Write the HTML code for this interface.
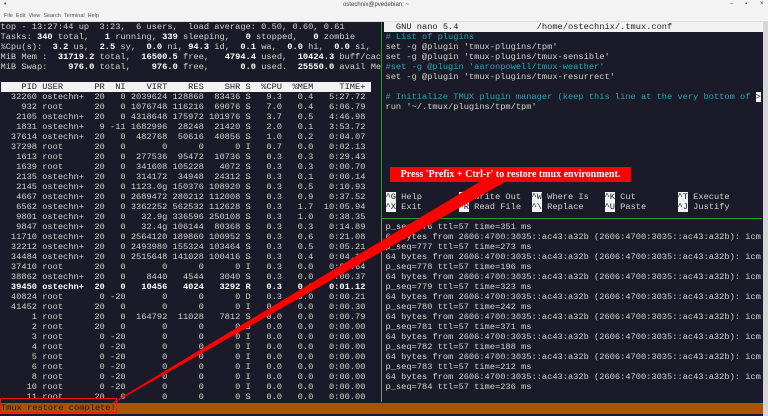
<!DOCTYPE html>
<html><head><meta charset="utf-8"><style>
html,body{margin:0;padding:0;width:768px;height:416px;overflow:hidden;background:#1b1a28;}
#title{position:absolute;left:0;top:0;width:768px;height:11px;background:#f3f3f3;font:6px "Liberation Sans",sans-serif;color:#444;}
#menu{position:absolute;left:0;top:11px;width:768px;height:10px;background:#f3f3f3;font:5.5px "Liberation Sans",sans-serif;color:#555;border-bottom:1px solid #ddd;}
.pane{position:absolute;font-family:"Liberation Mono",monospace;font-size:8.7px;line-height:10px;color:#d2d1cd;white-space:normal;}
.l{height:10px;white-space:pre;overflow:hidden;}
b{color:#fff;font-weight:bold;}
.c{color:#2aa4b6;}
.inv{background:#f2f2f2;color:#1b1a28;}
.hk{background:#f2f2f2;color:#1b1a28;}
</style></head><body>
<div id="title"><span style="position:absolute;left:4px;top:1px;font-size:7px">•</span><span style="position:absolute;left:343px;top:2px">ostechnix@pvedebian: ~</span><span style="position:absolute;left:730px;top:1px">–</span><span style="position:absolute;left:745px;top:1px">▪</span><span style="position:absolute;left:760px;top:1px">×</span></div>
<div id="menu"><span style="position:absolute;left:4px;top:2px">File&nbsp;&nbsp;Edit&nbsp;&nbsp;View&nbsp;&nbsp;Search&nbsp;&nbsp;Terminal&nbsp;&nbsp;Help</span></div>

<div style="position:absolute;left:381px;top:22px;width:1px;height:197px;background:#2a9a2a"></div>
<div style="position:absolute;left:381px;top:219px;width:1px;height:183px;background:#888"></div>
<div style="position:absolute;left:382px;top:218px;width:380px;height:1px;background:#2a9a2a"></div>
<div style="position:absolute;left:763px;top:22px;width:5px;height:394px;background:#d6d6d6"></div>

<div class="pane" style="left:0.5px;top:22px;width:380px"><div class="l">top - 13:27:44 up  3:23,  6 users,  load average: 0.50, 0.60, 0.61</div><div class="l">Tasks: <b>340</b> total,   <b>1</b> running, <b>339</b> sleeping,   <b>0</b> stopped,   <b>0</b> zombie</div><div class="l">%Cpu(s):  <b>3.2</b> us,  <b>2.5</b> sy,  <b>0.0</b> ni, <b>94.3</b> id,  <b>0.1</b> wa,  <b>0.0</b> hi,  <b>0.0</b> si,</div><div class="l">MiB Mem :  <b>31719.2</b> total,  <b>16500.5</b> free,   <b>4794.4</b> used,  <b>10424.3</b> buff/cac</div><div class="l">MiB Swap:    <b>976.0</b> total,    <b>976.0</b> free,      <b>0.0</b> used.  <b>25550.0</b> avail Me</div><div class="l"> </div><div class="l"><span class="inv">    PID USER      PR  NI    VIRT    RES    SHR S  %CPU  %MEM     TIME+ </span></div><div class="l">  32260 ostechn+  20   0 2039624 128868  83436 S   9.3   0.4   5:27.72</div><div class="l">    932 root      20   0 1076748 116216  69076 S   7.0   0.4   6:06.79</div><div class="l">   2105 ostechn+  20   0 4318648 175972 101976 S   3.7   0.5   4:46.98</div><div class="l">   1831 ostechn+   9 -11 1682996  28248  21420 S   2.0   0.1   3:53.72</div><div class="l">  37614 ostechn+  20   0  482768  50616  40856 S   1.0   0.2   0:04.07</div><div class="l">  37298 root      20   0       0      0      0 I   0.7   0.0   0:02.13</div><div class="l">   1613 root      20   0  277536  95472  10736 S   0.3   0.3   0:29.43</div><div class="l">   1639 root      20   0  341608 105228   4072 S   0.3   0.3   0:00.70</div><div class="l">   2135 ostechn+  20   0  314172  34948  24312 S   0.3   0.1   0:00.14</div><div class="l">   2145 ostechn+  20   0 1123.0g 150376 108920 S   0.3   0.5   0:10.93</div><div class="l">   4667 ostechn+  20   0 2689472 280212 112008 S   0.3   0.9   0:37.52</div><div class="l">   6562 ostechn+  20   0 3362252 562532 112628 S   0.3   1.7  10:05.94</div><div class="l">   9801 ostechn+  20   0   32.9g 336596 250108 S   0.3   1.0   0:38.35</div><div class="l">   9847 ostechn+  20   0   32.4g 106144  80368 S   0.3   0.3   0:14.89</div><div class="l">  11710 ostechn+  20   0 2564120 189860 100952 S   0.3   0.6   0:21.08</div><div class="l">  32212 ostechn+  20   0 2493980 155324 103464 S   0.3   0.5   0:05.21</div><div class="l">  34484 ostechn+  20   0 2515648 141028 100416 S   0.3   0.4   0:04.14</div><div class="l">  37410 root      20   0       0      0      0 I   0.3   0.0   0:01.64</div><div class="l">  38862 ostechn+  20   0    8440   4544   3040 S   0.3   0.0   0:00.37</div><div class="l"><b>  39450 ostechn+  20   0   10456   4024   3292 R   0.3   0.0   0:01.12</b></div><div class="l">  40824 root       0 -20       0      0      0 D   0.3   0.0   0:00.21</div><div class="l">  41452 root      20   0       0      0      0 I   0.3   0.0   0:00.30</div><div class="l">      1 root      20   0  164792  11028   7812 S   0.0   0.0   0:00.79</div><div class="l">      2 root      20   0       0      0      0 S   0.0   0.0   0:00.00</div><div class="l">      3 root       0 -20       0      0      0 I   0.0   0.0   0:00.00</div><div class="l">      4 root       0 -20       0      0      0 I   0.0   0.0   0:00.00</div><div class="l">      5 root       0 -20       0      0      0 I   0.0   0.0   0:00.00</div><div class="l">      6 root       0 -20       0      0      0 I   0.0   0.0   0:00.00</div><div class="l">      8 root       0 -20       0      0      0 I   0.0   0.0   0:00.00</div><div class="l">     10 root       0 -20       0      0      0 I   0.0   0.0   0:00.00</div><div class="l">     11 root      20   0       0      0      0 S   0.0   0.0   0:00.00</div></div>

<div class="pane" style="left:385.5px;top:22px;width:377px"><div class="l" style="background:#f2f2f2;color:#1b1a28;margin-left:-1.5px;padding-left:1.5px">  GNU nano 5.4               /home/ostechnix/.tmux.conf</div><div class="l c"># List of plugins</div><div class="l">set -g @plugin 'tmux-plugins/tpm'</div><div class="l">set -g @plugin 'tmux-plugins/tmux-sensible'</div><div class="l c">#set -g @plugin 'aaronpowell/tmux-weather'</div><div class="l">set -g @plugin 'tmux-plugins/tmux-resurrect'</div><div class="l"> </div><div class="l"><span class="c"># Initialize TMUX plugin manager (keep this line at the very bottom of </span><span class="inv">&gt;</span></div><div class="l">run '~/.tmux/plugins/tpm/tpm'</div><div class="l"> </div><div class="l"> </div><div class="l"> </div><div class="l"> </div><div class="l"> </div><div class="l"> </div><div class="l"> </div><div class="l"> </div><div class="l"><span class="hk">^G</span> Help       <span class="hk">^O</span> Write Out  <span class="hk">^W</span> Where Is   <span class="hk">^K</span> Cut        <span class="hk">^T</span> Execute</div><div class="l"><span class="hk">^X</span> Exit       <span class="hk">^R</span> Read File  <span class="hk">^\</span> Replace    <span class="hk">^U</span> Paste      <span class="hk">^J</span> Justify</div><div class="l"> </div><div class="l">p_seq=776 ttl=57 time=351 ms</div><div class="l">64 bytes from 2606:4700:3035::ac43:a32b (2606:4700:3035::ac43:a32b): icm</div><div class="l">p_seq=777 ttl=57 time=273 ms</div><div class="l">64 bytes from 2606:4700:3035::ac43:a32b (2606:4700:3035::ac43:a32b): icm</div><div class="l">p_seq=778 ttl=57 time=196 ms</div><div class="l">64 bytes from 2606:4700:3035::ac43:a32b (2606:4700:3035::ac43:a32b): icm</div><div class="l">p_seq=779 ttl=57 time=323 ms</div><div class="l">64 bytes from 2606:4700:3035::ac43:a32b (2606:4700:3035::ac43:a32b): icm</div><div class="l">p_seq=780 ttl=57 time=242 ms</div><div class="l">64 bytes from 2606:4700:3035::ac43:a32b (2606:4700:3035::ac43:a32b): icm</div><div class="l">p_seq=781 ttl=57 time=371 ms</div><div class="l">64 bytes from 2606:4700:3035::ac43:a32b (2606:4700:3035::ac43:a32b): icm</div><div class="l">p_seq=782 ttl=57 time=188 ms</div><div class="l">64 bytes from 2606:4700:3035::ac43:a32b (2606:4700:3035::ac43:a32b): icm</div><div class="l">p_seq=783 ttl=57 time=212 ms</div><div class="l">64 bytes from 2606:4700:3035::ac43:a32b (2606:4700:3035::ac43:a32b): icm</div><div class="l">p_seq=784 ttl=57 time=236 ms</div></div>

<div class="pane" style="left:0;top:403px;width:762px;height:11px;background:#a85400;color:#1b1a28;padding-left:1px;white-space:pre">Tmux restore complete!</div>
<div style="position:absolute;left:0;top:398px;width:117px;height:15px;border:1.5px solid #ff1010;box-sizing:border-box"></div>

<svg style="position:absolute;left:0;top:0" width="768" height="416"><polygon points="486,178 512,178 112,404 110,404" fill="#ff0000"/></svg>
<div style="position:absolute;left:390px;top:167px;width:241px;height:15px;background:#ff0000;color:#fff;font:bold 10px 'Liberation Serif',serif;line-height:15px;text-align:center;white-space:nowrap">Press 'Prefix + Ctrl-r' to restore tmux environment.</div>
</body></html>
